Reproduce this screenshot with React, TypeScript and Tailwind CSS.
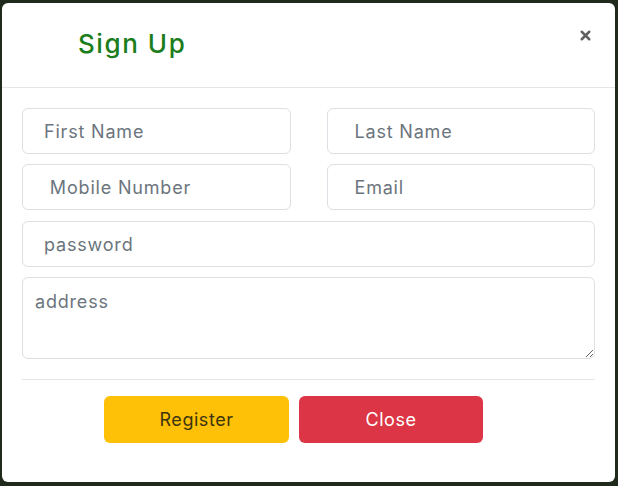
import { X } from 'lucide-react';

const font = { fontFamily: 'Inter, "Noto Sans", sans-serif' };

const inputCls =
  'h-[46px] w-full rounded-md border border-[#dcdfe3] bg-white text-[18px] tracking-[0.045em] text-[#212529] outline-none placeholder:text-[#6c757d]';

export default function App() {
  return (
    <div className="h-[486px] w-[618px] bg-[#1f2a1c] pb-[4px] pl-[2px] pr-[3px] pt-[3px]" style={font}>
      <div className="flex h-full flex-col rounded-md bg-white">
        {/* header */}
        <div className="flex h-[85px] items-center justify-between border-b border-[#e3e5e8] pl-[76px] pr-[22px]">
          <h2 className="pb-[4px] text-[26px] font-medium tracking-[0.06em] text-[#1b7d1b]">Sign Up</h2>
          <button className="mb-[20px] text-[#606060]">
            <X size={15} strokeWidth={4} />
          </button>
        </div>

        {/* body */}
        <div className="px-[20px] pt-[20px]">
          <div className="grid grid-cols-2 gap-x-[36px] gap-y-[10px]">
            <input className={`${inputCls} pl-[21px]`} placeholder="First Name" />
            <input className={`${inputCls} pl-[27px]`} placeholder="Last Name" />
            <input className={`${inputCls} pl-[21px]`} placeholder=" Mobile Number" />
            <input className={`${inputCls} pl-[27px]`} placeholder="Email" />
            <input className={`${inputCls} col-span-2 mt-[1px] pl-[21px]`} placeholder="password" type="password" />
            <textarea
              className="col-span-2 h-[82px] w-full rounded-md border border-[#dcdfe3] px-[12px] py-[10px] text-[18px] tracking-[0.045em] text-[#212529] outline-none placeholder:text-[#6c757d]"
              placeholder="address"
            />
          </div>

          <div className="mt-[20px] border-t border-[#e3e5e8]" />

          <div className="flex gap-[10px] pl-[82px] pt-[16px]">
            <button className="h-[47px] w-[185px] rounded-md bg-[#ffc107] text-[18px] tracking-[0.03em] text-[#3d3410]">Register</button>
            <button className="h-[47px] w-[184px] rounded-md bg-[#dc3545] text-[18px] tracking-[0.03em] text-white">Close</button>
          </div>
        </div>
      </div>
    </div>
  );
}
